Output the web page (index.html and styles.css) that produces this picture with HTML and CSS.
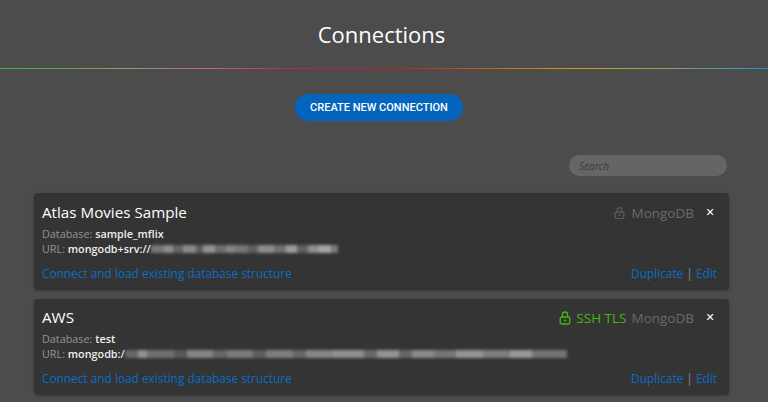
FILE: index.html
```html
<!DOCTYPE html>
<html lang="en">
<head>
    <meta charset="UTF-8">
    <meta name="viewport" content="width=device-width, initial-scale=1.0">
    <title>Connections</title>
    <link rel="stylesheet" href="styles.css">
</head>
<body>
    <header class="header">
        <h1>Connections</h1>
    </header>
    <div class="actions">
        <button class="create-btn">CREATE NEW CONNECTION</button>
    </div>
    <div class="search-row">
        <input class="search" type="text" placeholder="Search">
    </div>
    <div class="list">
        <div class="card">
            <div class="card-top">
                <h2>Atlas Movies Sample</h2>
                <div class="badges">
                    <svg class="lock lock-off" width="11" height="14" viewBox="0 0 12 14"><path d="M3.5 6V3.5a2.5 2.5 0 0 1 5 0V6" fill="none" stroke="currentColor" stroke-width="1.3"/><rect x="1.2" y="6" width="9.6" height="7" rx="1.6" fill="none" stroke="currentColor" stroke-width="1.3"/><circle cx="6" cy="9.5" r="1.1" fill="currentColor"/></svg>
                    <span class="driver driver-gap">MongoDB</span>
                    <span class="close">&#10005;</span>
                </div>
            </div>
            <div class="info">Database: <b>sample_mflix</b></div>
            <div class="info url">URL: <b>mongodb+srv://</b><span class="blur blur-short"></span></div>
            <div class="card-bottom">
                <a href="#">Connect and load existing database structure</a>
                <div class="links"><a href="#">Duplicate</a> <span class="sep">|</span> <a href="#">Edit</a></div>
            </div>
        </div>
        <div class="card">
            <div class="card-top">
                <h2>AWS</h2>
                <div class="badges">
                    <svg class="lock lock-on" width="12" height="14" viewBox="0 0 12 14"><path d="M3.5 6V3.5a2.5 2.5 0 0 1 5 0V6" fill="none" stroke="currentColor" stroke-width="1.3"/><rect x="1.2" y="6" width="9.6" height="7" rx="1.6" fill="none" stroke="currentColor" stroke-width="1.3"/><circle cx="6" cy="9.5" r="1.1" fill="currentColor"/></svg>
                    <span class="ssh">SSH TLS</span>
                    <span class="driver">MongoDB</span>
                    <span class="close">&#10005;</span>
                </div>
            </div>
            <div class="info">Database: <b>test</b></div>
            <div class="info url">URL: <b>mongodb:/</b><span class="blur blur-long"></span></div>
            <div class="card-bottom">
                <a href="#">Connect and load existing database structure</a>
                <div class="links"><a href="#">Duplicate</a> <span class="sep">|</span> <a href="#">Edit</a></div>
            </div>
        </div>
    </div>
</body>
</html>
```

FILE: styles.css
```css
html, body {
    height: 100%;
}
body {
    margin: 0;
    overflow: hidden;
    background-color: #4c4c4c;
    color: #fff;
    font-family: "Open Sans", sans-serif;
}
.header {
    height: 68px;
    border-bottom: 1px solid transparent;
    border-image: linear-gradient(to right, #3fae3f 0%, #8f9a6a 16%, #c0688c 27%, #c2205a 38%, #c21f1f 52%, #c46a10 64%, #c9a40c 76%, #8f9f66 87%, #1c94d8 100%) 1;
}
h1 {
    margin: 0;
    padding-top: 18px;
    padding-right: 5px;
    text-align: center;
    font-size: 22px;
    font-weight: 400;
    line-height: 32px;
}
.actions {
    padding-top: 25px;
    padding-right: 10px;
    display: flex;
    justify-content: center;
}
.create-btn {
    width: 168px;
    height: 27px;
    padding: 0;
    border: none;
    border-radius: 14px;
    background-color: #0565bd;
    color: #fff;
    font-family: Roboto, sans-serif;
    font-size: 11px;
    font-weight: 500;
}
.search-row {
    display: flex;
    justify-content: flex-end;
    padding: 34px 41px 0 0;
}
.search {
    width: 158px;
    height: 21px;
    padding: 0 10px;
    box-sizing: border-box;
    border: none;
    border-radius: 11px;
    background-color: #656565;
    font-family: "Open Sans", sans-serif;
    font-size: 10px;
    font-style: italic;
}
.search::placeholder {
    color: #3c3c3c;
}
.list {
    display: flex;
    flex-direction: column;
    gap: 9px;
    padding: 17px 39px 0 34px;
}
.card {
    height: 97px;
    padding: 9px 12px 0 8px;
    box-sizing: border-box;
    background-color: #343434;
    border-radius: 4px;
    box-shadow: 0 1px 3px rgba(0, 0, 0, 0.25);
}
.card + .card {
    height: 96px;
    padding-top: 8px;
}
.card-top {
    display: flex;
    justify-content: space-between;
    align-items: center;
    height: 21px;
    margin-bottom: 3px;
}
h2 {
    margin: 0;
    font-size: 15.2px;
    font-weight: 400;
    line-height: 21px;
}
.badges {
    display: flex;
    align-items: center;
    font-size: 13.5px;
}
.lock {
    display: block;
    margin-right: 5px;
}
.lock-off {
    color: #5e5e5e;
}
.lock-on {
    color: #46b80f;
}
.driver {
    color: #6a6a6a;
}
.driver-gap {
    margin-left: 1px;
}
.ssh {
    color: #46b80f;
    margin-right: 5px;
}
.close {
    width: 12px;
    margin-left: 10px;
    margin-right: 1px;
    font-size: 11px;
    line-height: 12px;
    font-family: "DejaVu Sans", sans-serif;
    font-weight: 700;
    text-align: center;
}
.info {
    font-size: 10.8px;
    line-height: 15px;
    color: #949494;
}
.info b {
    font-weight: 600;
    color: #eee;
}
.url {
    display: flex;
    align-items: center;
    white-space: pre;
}
.blur {
    display: block;
    height: 8px;
    filter: blur(1.5px);
}
.blur-short {
    width: 187px;
    background: linear-gradient(to right, #777 0 7%, #8d8d8d 7% 12%, #666 12% 17%, #8a8a8a 17% 24%, #5c5c5c 24% 28%, #939393 28% 34%, #6e6e6e 34% 40%, #858585 40% 45%, #777 45% 52%, #5f5f5f 52% 57%, #8c8c8c 57% 66%, #6f6f6f 66% 72%, #9c9c9c 72% 78%, #606060 78% 84%, #8e8e8e 84% 90%, #a5a5a5 90% 96%, #7a7a7a 96% 100%);
}
.blur-long {
    width: 442px;
    background: linear-gradient(to right, #666 0 3%, #939393 3% 5%, #707070 5% 11%, #595959 11% 14%, #848484 14% 20%, #666 20% 23%, #7a7a7a 23% 29%, #5f5f5f 29% 32%, #7f7f7f 32% 38%, #666 38% 41%, #868686 41% 47%, #8f8f8f 47% 54%, #6a6a6a 54% 57%, #949494 57% 62%, #666 62% 65%, #8a8a8a 65% 70%, #757575 70% 75%, #949494 75% 81%, #7e7e7e 81% 87%, #999 87% 92%, #737373 92% 100%);
}
.card-bottom {
    display: flex;
    justify-content: space-between;
    margin-top: 9px;
    font-size: 11.85px;
    line-height: 17px;
}
a {
    color: #0a6ec4;
    text-decoration: none;
}
.sep {
    color: #8a8a8a;
}
```
